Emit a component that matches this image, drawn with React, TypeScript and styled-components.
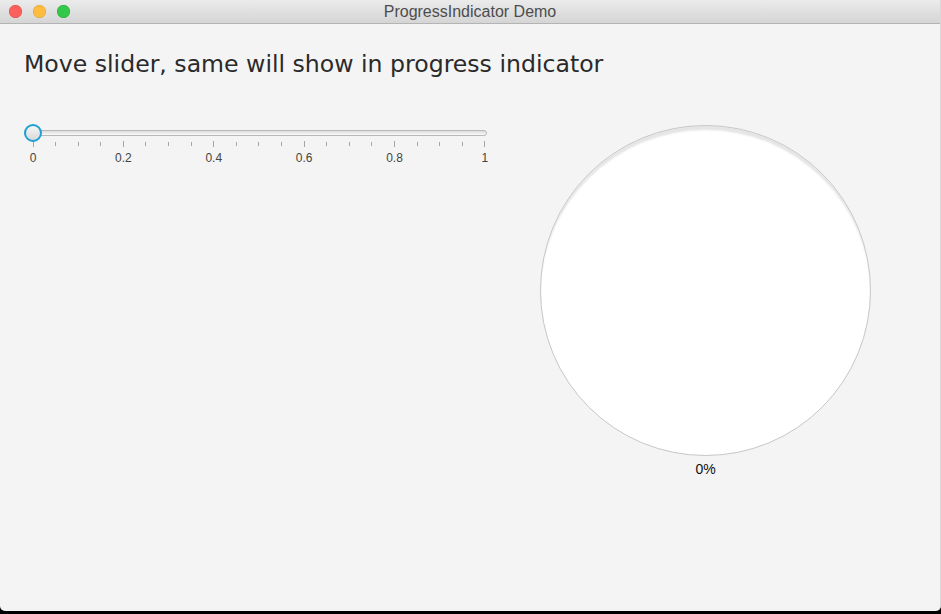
import React from 'react';
import styled, { createGlobalStyle } from 'styled-components';

const GlobalStyle = createGlobalStyle`
  html, body {
    margin: 0;
    padding: 0;
    background: #000;
    overflow: hidden;
  }
`;

const lights = [
  { fill: '#fc605c', edge: '#de4a46' },
  { fill: '#fdbc40', edge: '#dea236' },
  { fill: '#34c84a', edge: '#27aa35' },
];

const ticks = Array.from({ length: 21 }, (_, i) => i);
const labelFor = (i: number) => (i === 0 ? '0' : i === 20 ? '1' : `0.${(i / 4) * 2}`);

const Window = styled.div`
  width: 940px;
  height: 611px;
  background: #f4f4f4;
  border-radius: 0 0 5px 5px;
  border-right: 1px solid #d8d8d8;
  display: flex;
  flex-direction: column;
  overflow: hidden;
`;

const TitleBar = styled.div`
  position: relative;
  height: 23px;
  flex: none;
  background: linear-gradient(#ebebeb, #d5d5d5);
  border-bottom: 1px solid #b4b4b4;
  display: flex;
  align-items: center;
  justify-content: center;
`;

const Lights = styled.div`
  position: absolute;
  left: 9px;
  top: 5px;
  display: flex;
  gap: 11px;
`;

const Light = styled.span<{ $fill: string; $edge: string }>`
  width: 13px;
  height: 13px;
  border-radius: 50%;
  background: ${(p) => p.$fill};
  box-shadow: inset 0 0 0 0.5px ${(p) => p.$edge};
`;

const Title = styled.div`
  font-family: 'Liberation Sans', Arial, sans-serif;
  font-size: 16px;
  line-height: 18px;
  color: #4d4d4d;
`;

const Content = styled.main`
  padding: 25px 0 0 24px;
`;

const Heading = styled.h1`
  margin: 0;
  font-family: 'DejaVu Sans', Verdana, sans-serif;
  font-weight: normal;
  font-size: 23.6px;
  line-height: 30px;
  color: #2a2a2a;
`;

const Row = styled.div`
  display: flex;
  align-items: flex-start;
  margin-top: 45px;
`;

const SliderBox = styled.div`
  position: relative;
  width: 463px;
  padding-top: 6px;
`;

const Track = styled.div`
  height: 4px;
  border: 1px solid #b9b9b9;
  border-radius: 3px;
  background: linear-gradient(#dcdcdc, #fafafa);
`;

const Thumb = styled.div`
  position: absolute;
  left: 0;
  top: 0;
  width: 14px;
  height: 14px;
  border: 2px solid #1ea0d6;
  border-radius: 50%;
  background: linear-gradient(#f6f6f6, #d9d9d9);
`;

const TickRow = styled.div`
  display: flex;
  justify-content: space-between;
  padding: 5px 2px 0 9px;
`;

const Tick = styled.div`
  width: 0;
  display: flex;
  flex-direction: column;
  align-items: center;
`;

const TickMark = styled.span<{ $major: boolean }>`
  width: 1px;
  height: ${(p) => (p.$major ? 6 : 4)}px;
  margin-top: ${(p) => (p.$major ? 0 : 1)}px;
  background: #a6a6a6;
`;

const TickLabel = styled.span`
  margin-top: 5px;
  font-family: 'Liberation Sans', Arial, sans-serif;
  font-size: 12px;
  line-height: 12px;
  color: #444;
  white-space: nowrap;
`;

const Indicator = styled.div`
  margin-left: 53px;
  margin-top: 1px;
  display: flex;
  flex-direction: column;
  align-items: center;
`;

const Disc = styled.div`
  width: 329px;
  height: 329px;
  border-radius: 50%;
  border: 1px solid #c6c6c6;
  background: #fff;
  box-shadow: inset 0 5px 2px -1px #e5e5e5;
`;

const Percent = styled.div`
  margin-top: 4px;
  font-family: 'Liberation Sans', Arial, sans-serif;
  font-size: 14px;
  line-height: 18px;
  color: #111;
`;

export default function App() {
  return (
    <>
      <GlobalStyle />
      <Window>
        <TitleBar>
          <Lights>
            {lights.map((l, i) => (
              <Light key={`light-${i}`} $fill={l.fill} $edge={l.edge} />
            ))}
          </Lights>
          <Title>ProgressIndicator Demo</Title>
        </TitleBar>
        <Content>
          <Heading>Move slider, same will show in progress indicator</Heading>
          <Row>
            <SliderBox>
              <Track />
              <Thumb />
              <TickRow>
                {ticks.map((i) => (
                  <Tick key={`tick-${i}`}>
                    <TickMark $major={i % 4 === 0} />
                    {i % 4 === 0 && <TickLabel>{labelFor(i)}</TickLabel>}
                  </Tick>
                ))}
              </TickRow>
            </SliderBox>
            <Indicator>
              <Disc />
              <Percent>0%</Percent>
            </Indicator>
          </Row>
        </Content>
      </Window>
    </>
  );
}
